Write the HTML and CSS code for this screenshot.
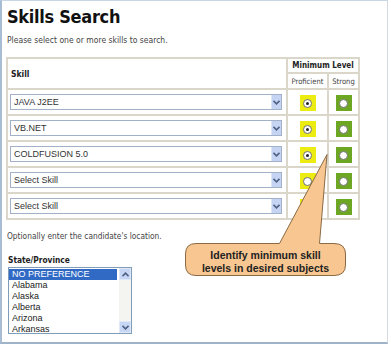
FILE: index.html
```html
<!DOCTYPE html>
<html>
<head>
<meta charset="utf-8">
<link rel="stylesheet" href="styles.css">
</head>
<body>
<div class="frame">
  <h1 class="title">Skills Search</h1>
  <p class="intro">Please select one or more skills to search.</p>
  <table class="skills">
    <colgroup><col class="c-skill"><col class="c-prof"><col class="c-strong"></colgroup>
    <thead>
      <tr><th rowspan="2" class="skill-h">Skill</th><th colspan="2" class="min-h">Minimum Level</th></tr>
      <tr class="sub-row"><th class="sub">Proficient</th><th class="sub">Strong</th></tr>
    </thead>
    <tbody>
      <tr><td class="sel-cell"><div class="select"><span class="val">JAVA J2EE</span><span class="arrow"><svg width="7" height="5" viewBox="0 0 7 5"><path d="M0.5 0.8 L3.5 3.8 L6.5 0.8" fill="none" stroke="#4d6185" stroke-width="1.6"/></svg></span></div></td>
        <td class="rad"><span class="sq prof"><span class="radio on"></span></span></td>
        <td class="rad"><span class="sq strong"><span class="radio"></span></span></td></tr>
      <tr><td class="sel-cell"><div class="select"><span class="val">VB.NET</span><span class="arrow"><svg width="7" height="5" viewBox="0 0 7 5"><path d="M0.5 0.8 L3.5 3.8 L6.5 0.8" fill="none" stroke="#4d6185" stroke-width="1.6"/></svg></span></div></td>
        <td class="rad"><span class="sq prof"><span class="radio on"></span></span></td>
        <td class="rad"><span class="sq strong"><span class="radio"></span></span></td></tr>
      <tr><td class="sel-cell"><div class="select"><span class="val">COLDFUSION 5.0</span><span class="arrow"><svg width="7" height="5" viewBox="0 0 7 5"><path d="M0.5 0.8 L3.5 3.8 L6.5 0.8" fill="none" stroke="#4d6185" stroke-width="1.6"/></svg></span></div></td>
        <td class="rad"><span class="sq prof"><span class="radio on"></span></span></td>
        <td class="rad"><span class="sq strong"><span class="radio"></span></span></td></tr>
      <tr><td class="sel-cell"><div class="select"><span class="val">Select Skill</span><span class="arrow"><svg width="7" height="5" viewBox="0 0 7 5"><path d="M0.5 0.8 L3.5 3.8 L6.5 0.8" fill="none" stroke="#4d6185" stroke-width="1.6"/></svg></span></div></td>
        <td class="rad"><span class="sq prof"><span class="radio"></span></span></td>
        <td class="rad"><span class="sq strong"><span class="radio"></span></span></td></tr>
      <tr><td class="sel-cell"><div class="select"><span class="val">Select Skill</span><span class="arrow"><svg width="7" height="5" viewBox="0 0 7 5"><path d="M0.5 0.8 L3.5 3.8 L6.5 0.8" fill="none" stroke="#4d6185" stroke-width="1.6"/></svg></span></div></td>
        <td class="rad"><span class="sq prof"><span class="radio"></span></span></td>
        <td class="rad"><span class="sq strong"><span class="radio"></span></span></td></tr>
    </tbody>
  </table>
  <p class="loc">Optionally enter the candidate's location.</p>
  <div class="state-label">State/Province</div>
  <div class="listbox">
    <div class="items">
      <div class="item selected">NO PREFERENCE</div>
      <div class="item">Alabama</div>
      <div class="item">Alaska</div>
      <div class="item">Alberta</div>
      <div class="item">Arizona</div>
      <div class="item">Arkansas</div>
    </div>
    <div class="scroll">
      <span class="sbtn"><svg width="7" height="5" viewBox="0 0 7 5"><path d="M0.5 4.2 L3.5 1.2 L6.5 4.2" fill="none" stroke="#4d6185" stroke-width="1.6"/></svg></span>
      <span class="track"></span>
      <span class="sbtn"><svg width="7" height="5" viewBox="0 0 7 5"><path d="M0.5 0.8 L3.5 3.8 L6.5 0.8" fill="none" stroke="#4d6185" stroke-width="1.6"/></svg></span>
    </div>
  </div>
  <div class="callout">
    <svg class="bubble" width="170" height="125" viewBox="0 0 170 125">
      <path d="M14 89.5 L97.5 89.5 L145 0.5 L137.5 89.5 L152 89.5 Q163.5 89.5 163.5 100 L163.5 111 Q163.5 121.5 152 121.5 L14 121.5 Q3.5 121.5 3.5 111 L3.5 100 Q3.5 89.5 14 89.5 Z" fill="#f8c690" stroke="#8a6a44" stroke-width="1"/>
    </svg>
    <div class="callout-text">Identify minimum skill<br>levels in desired subjects</div>
  </div>
</div>
</body>
</html>
```
FILE: styles.css
```css
html, body { margin: 0; padding: 0; background: #fff; }
.frame {
  position: relative;
  width: 385px;
  height: 341px;
  border-left: 2px solid #a8bdd4;
  border-top: 1px solid #c9d6e5;
  border-right: 1px solid #d3dae2;
  border-bottom: 2px solid #9fb3c9;
  font-family: "DejaVu Sans Condensed", "DejaVu Sans", sans-serif;
  color: #222;
  overflow: hidden;
}
.title {
  margin: 6px 0 0 5px;
  font-size: 18px;
  line-height: 20px;
  font-weight: bold;
  letter-spacing: -0.3px;
  color: #111;
}
.intro {
  margin: 8px 0 0 5px;
  font-size: 8.5px;
  line-height: 10px;
  color: #444;
}
.skills {
  margin: 12px 0 0 4px;
  border-collapse: collapse;
  width: 352px;
  table-layout: fixed;
}
.c-skill { width: 280px; }
.c-prof { width: 41px; }
.c-strong { width: 31px; }
.skills th, .skills td {
  border: 2px solid #dad6ca;
  padding: 0;
}
.skill-h {
  text-align: left;
  font-size: 8.5px;
  padding-left: 3px !important;
  color: #222;
}
.min-h {
  height: 13px;
  font-size: 8px;
  font-weight: bold;
  color: #222;
}
.sub {
  height: 14px;
  font-size: 7.6px;
  font-weight: normal;
  color: #444;
}
.sel-cell { height: 24px; }
.select {
  margin-left: 2px;
  width: 270px;
  height: 14px;
  border: 1px solid #a2b1c7;
  background: #fff;
  display: flex;
  align-items: center;
  justify-content: space-between;
}
.val {
  font-family: "Liberation Sans", Arial, sans-serif;
  font-size: 9px;
  color: #333;
  padding-left: 3px;
}
.arrow {
  width: 9px;
  height: 14px;
  background: #c5d4f2;
  border-left: 1px solid #dde6f7;
  display: flex;
  align-items: center;
  justify-content: center;
}
.rad { text-align: center; vertical-align: middle; }
.sq {
  display: inline-flex;
  width: 16px;
  height: 16px;
  align-items: center;
  justify-content: center;
  vertical-align: middle;
}
.sq.prof { background: #ecec12; }
.sq.strong { background: #6ca622; }
.radio {
  width: 7px;
  height: 7px;
  border-radius: 50%;
  border: 1px solid #707070;
  background: #fff;
  display: flex;
  align-items: center;
  justify-content: center;
}
.radio.on::after {
  content: "";
  width: 3px;
  height: 3px;
  border-radius: 50%;
  background: #222;
}
.loc {
  margin: 11px 0 0 5px;
  font-size: 8.3px;
  line-height: 10px;
  color: #444;
}
.state-label {
  margin: 14px 0 0 6px;
  font-size: 8.3px;
  line-height: 10px;
  font-weight: bold;
  color: #222;
}
.listbox {
  margin: 2px 0 0 6px;
  width: 122px;
  height: 65px;
  border: 1px solid #7f9db9;
  display: flex;
  background: #fff;
}
.items { flex: 1; padding-top: 1px; }
.item {
  font-family: "Liberation Sans", Arial, sans-serif;
  font-size: 9px;
  line-height: 11px;
  height: 11px;
  padding-left: 3px;
  color: #222;
}
.item.selected { background: #316ac5; color: #fff; margin-right: 2px; }
.scroll {
  width: 12px;
  display: flex;
  flex-direction: column;
  background: #f4f4f0;
}
.sbtn {
  height: 12px;
  background: #c7d6f5;
  border: 1px solid #e0e8f8;
  box-sizing: border-box;
  display: flex;
  align-items: center;
  justify-content: center;
}
.track { flex: 1; }
.callout {
  position: absolute;
  left: 180px;
  top: 153px;
  width: 170px;
  height: 125px;
}
.bubble { position: absolute; left: 0; top: 0; }
.callout-text {
  position: absolute;
  left: 3px;
  top: 95px;
  width: 161px;
  text-align: center;
  font-family: "Liberation Sans", Arial, sans-serif;
  font-weight: bold;
  font-size: 10.5px;
  line-height: 13px;
  color: #222;
}
```
